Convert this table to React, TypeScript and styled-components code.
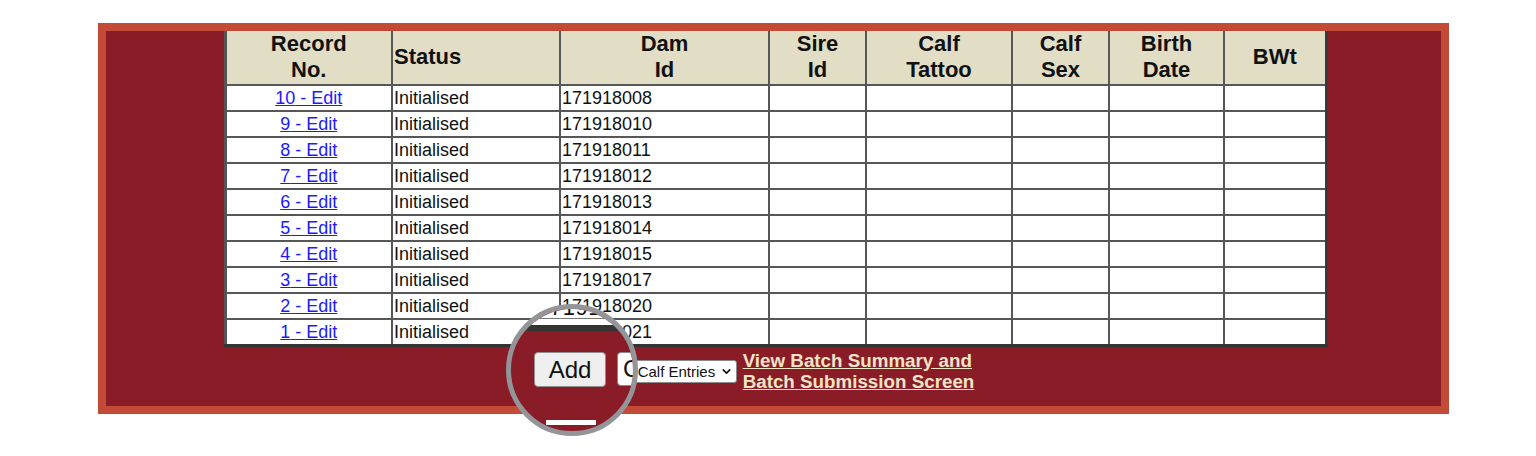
import React from "react";
import styled, { createGlobalStyle } from "styled-components";
import { ChevronDown } from "lucide-react";

const GlobalStyle = createGlobalStyle`
  html, body {
    margin: 0;
    padding: 0;
    background: #ffffff;
    font-family: "Liberation Sans", Arial, Helvetica, sans-serif;
  }
`;

const Page = styled.div`
  position: relative;
  padding: 23px 0 0 98px;
  width: 1536px;
  height: 456px;
  box-sizing: border-box;
`;

const Panel = styled.div`
  width: 1351px;
  box-sizing: border-box;
  border: 8px solid #c44a38;
  background: #8a1c28;
  display: flex;
  flex-direction: column;
  align-items: center;
  padding-bottom: 14px;
`;

const Grid = styled.table`
  table-layout: fixed;
  border-collapse: collapse;
  margin-left: 4px;
  border-left: 3px solid #555;
  border-right: 3px solid #3a3a3a;
  border-bottom: 3px solid #333;
  background: #fff;
  color: #111;
`;

const Col = styled.col<{ $w: number }>`
  width: ${(p) => p.$w}px;
`;

const HeadCell = styled.th<{ $align?: string }>`
  background: #e2dec6;
  font-weight: bold;
  font-size: 22px;
  line-height: 26px;
  padding: 0 1px 1px;
  text-align: ${(p) => p.$align || "center"};
  vertical-align: middle;
  border: 2px solid #575757;
  border-top: none;
`;

const Cell = styled.td<{ $align?: string }>`
  font-size: 18px;
  line-height: 24px;
  height: 24px;
  padding: 0 1px;
  text-align: ${(p) => p.$align || "left"};
  border: 2px solid #575757;
  white-space: nowrap;
  overflow: hidden;
`;

const EditLink = styled.a`
  color: #1a1aff;
  text-decoration: underline;
  cursor: pointer;
`;

const FormRow = styled.div`
  display: flex;
  align-items: center;
  justify-content: center;
  margin-top: 3px;
  width: 100%;
`;

const AddButton = styled.button`
  width: 39px;
  height: 22px;
  font-family: inherit;
  font-size: 13px;
  padding: 0;
  margin-right: 4px;
  background: #efefef;
  border: 1px solid #8f8f8f;
  border-radius: 3px;
`;

const SelectWrap = styled.div`
  position: relative;
  margin-right: 6px;
  display: flex;
`;

const EntrySelect = styled.select`
  appearance: none;
  -webkit-appearance: none;
  width: 121px;
  height: 23px;
  font-family: "Liberation Sans", Arial, sans-serif;
  font-size: 15px;
  color: #111;
  background: #fff;
  border: 1px solid #8a8a8a;
  border-radius: 3px;
  padding: 0 0 0 21px;
  margin: 0;
`;

const SelectChevron = styled.span`
  position: absolute;
  right: 4px;
  top: 5px;
  display: flex;
  pointer-events: none;
  color: #111;
`;

const SummaryLink = styled.a`
  color: #efe5c6;
  font-weight: bold;
  font-size: 18.8px;
  line-height: 21px;
  text-decoration: underline;
  cursor: pointer;
`;

/* Magnifier overlay */
const Magnifier = styled.div`
  position: absolute;
  left: 506px;
  top: 304px;
  width: 132px;
  height: 132px;
  border-radius: 50%;
  overflow: hidden;
  background: #8a1c28;
  box-sizing: border-box;
  border: 5px solid #939598;
`;

const Lens = styled.div`
  position: absolute;
  left: -5px;
  top: -5px;
  width: 132px;
  height: 132px;
`;

const LensTable = styled.div`
  position: absolute;
  left: 0;
  top: 0;
  width: 132px;
  height: 21px;
  background: #fff;
  border-bottom: 6px solid #333;
`;

const LensRule = styled.div`
  position: absolute;
  left: 0;
  top: 14px;
  width: 100px;
  height: 1px;
  background: #777;
`;

const LensDigits = styled.div`
  position: absolute;
  left: 44px;
  top: -9px;
  font-size: 22px;
  line-height: 26px;
  color: #111;
  letter-spacing: 0.5px;
`;

const LensButton = styled.div`
  position: absolute;
  left: 28px;
  top: 48px;
  width: 72px;
  height: 35px;
  box-sizing: border-box;
  background: #efefef;
  border: 1px solid #8f8f8f;
  border-radius: 4px;
  display: flex;
  align-items: center;
  justify-content: center;
  font-size: 24px;
  color: #111;
`;

const LensSelect = styled.div`
  position: absolute;
  left: 111px;
  top: 48px;
  width: 60px;
  height: 34px;
  box-sizing: border-box;
  background: #fff;
  border: 1px solid #888;
  border-radius: 4px;
  font-size: 24px;
  line-height: 32px;
  padding-left: 5px;
  color: #111;
`;

const LensStrip = styled.div`
  position: absolute;
  left: 40px;
  top: 116px;
  width: 50px;
  height: 5px;
  background: #fff;
`;

const damIds = [
  "171918008",
  "171918010",
  "171918011",
  "171918012",
  "171918013",
  "171918014",
  "171918015",
  "171918017",
  "171918020",
  "171918021",
];

const colWidths = [167, 168, 209, 97, 146, 97, 115, 102];

export default function App() {
  return (
    <>
      <GlobalStyle />
      <Page>
        <Panel>
          <Grid>
            <colgroup>
              {colWidths.map((w, i) => (
                <Col key={i} $w={w} />
              ))}
            </colgroup>
            <thead>
              <tr>
                <HeadCell>
                  Record
                  <br />
                  No.
                </HeadCell>
                <HeadCell $align="left">Status</HeadCell>
                <HeadCell>
                  Dam
                  <br />
                  Id
                </HeadCell>
                <HeadCell>
                  Sire
                  <br />
                  Id
                </HeadCell>
                <HeadCell>
                  Calf
                  <br />
                  Tattoo
                </HeadCell>
                <HeadCell>
                  Calf
                  <br />
                  Sex
                </HeadCell>
                <HeadCell>
                  Birth
                  <br />
                  Date
                </HeadCell>
                <HeadCell>BWt</HeadCell>
              </tr>
            </thead>
            <tbody>
              {damIds.map((id, i) => (
                <tr key={id}>
                  <Cell $align="center">
                    <EditLink>{10 - i} - Edit</EditLink>
                  </Cell>
                  <Cell>Initialised</Cell>
                  <Cell>{id}</Cell>
                  <Cell />
                  <Cell />
                  <Cell />
                  <Cell />
                  <Cell />
                </tr>
              ))}
            </tbody>
          </Grid>
          <FormRow>
            <AddButton>Add</AddButton>
            <SelectWrap>
              <EntrySelect defaultValue="calf">
                <option value="calf">Calf Entries</option>
              </EntrySelect>
              <SelectChevron>
                <ChevronDown size={13} strokeWidth={3} />
              </SelectChevron>
            </SelectWrap>
            <SummaryLink>
              View Batch Summary and
              <br />
              Batch Submission Screen
            </SummaryLink>
          </FormRow>
        </Panel>
        <Magnifier>
          <Lens>
            <LensTable />
            <LensRule />
            <LensDigits>71918</LensDigits>
            <LensButton>Add</LensButton>
            <LensSelect>Calf</LensSelect>
            <LensStrip />
          </Lens>
        </Magnifier>
      </Page>
    </>
  );
}
